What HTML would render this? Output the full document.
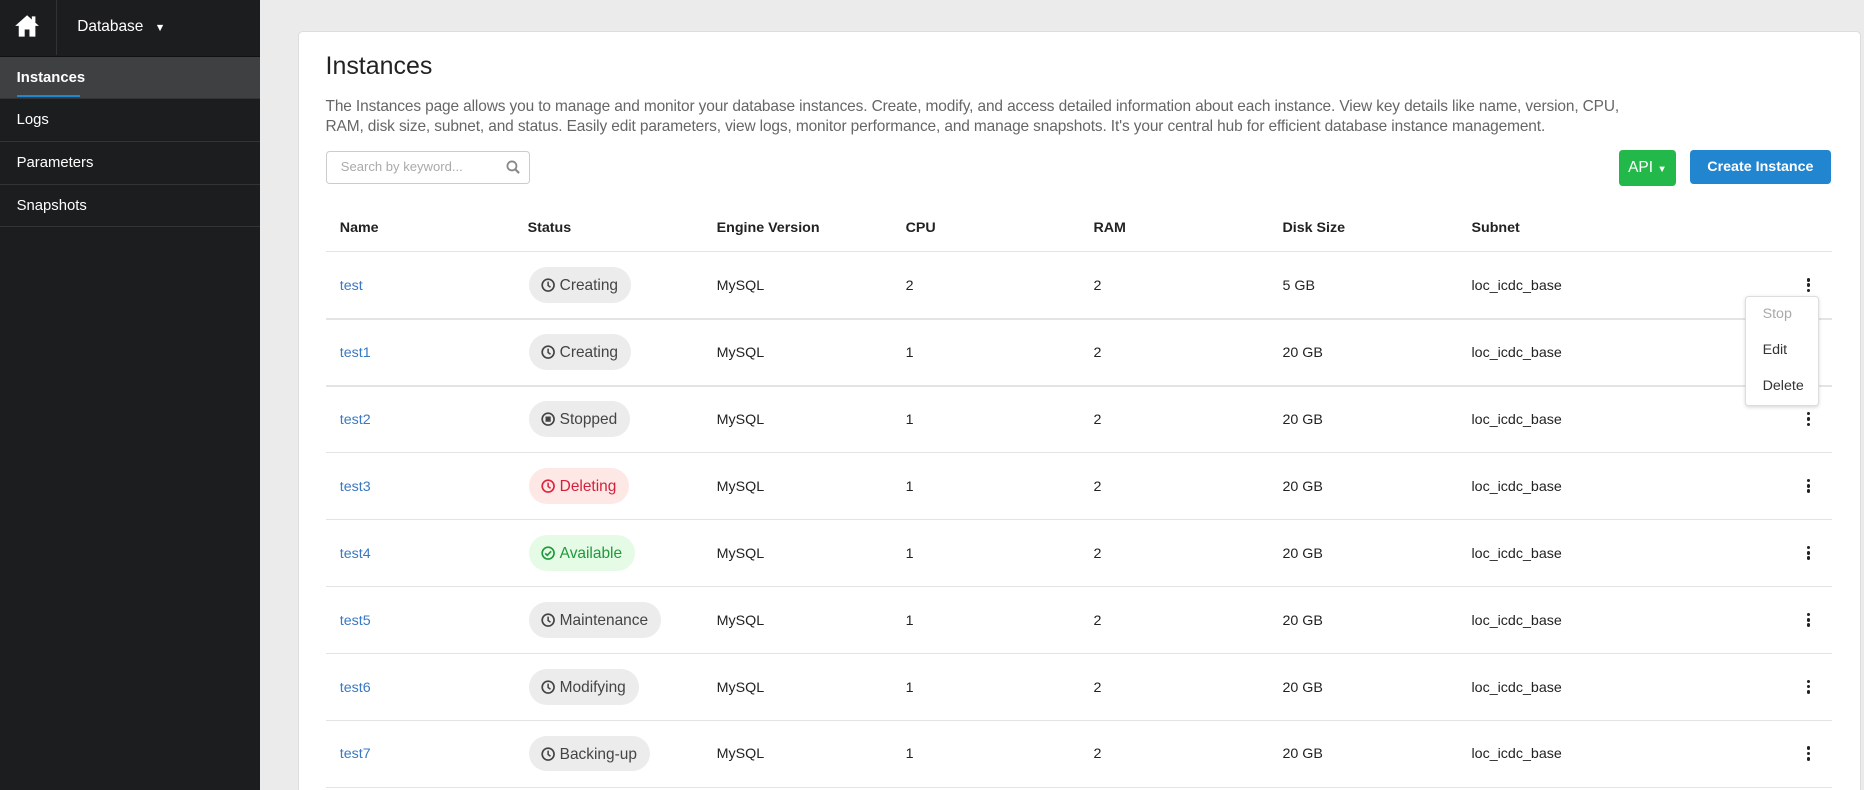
<!DOCTYPE html><html><head><style>
html,body{margin:0;padding:0;width:1864px;height:790px;overflow:hidden;background:#ebebeb;font-family:"Liberation Sans",sans-serif}
#w{zoom:1.18878;width:1568px;height:665px;position:relative}
.sb{position:absolute;left:0;top:0;width:219px;height:665px;background:#1c1d1f;color:#fff}
.hd{height:47px;position:relative;border-bottom:1px solid #111}
.hd .dv{position:absolute;left:47px;top:0;width:1px;height:46px;background:#333}
.hd .db{position:absolute;left:65px;top:15px;font-size:13px}
.nav div{height:35px;line-height:36px;padding-left:14px;font-size:12.5px;border-bottom:1px solid #333;position:relative}
.nav .on{background:#3f4042;font-weight:bold}
.nav .on:after{content:"";position:absolute;left:14px;bottom:1px;width:53px;height:2px;background:#2285d0}
.card{position:absolute;left:251px;top:26px;width:1313px;height:650px;background:#fff;border:1px solid #ddd;border-radius:4px}
.a{position:absolute}
h1{position:absolute;left:22px;top:17px;margin:0;font-size:21px;font-weight:normal;color:#222}
.desc{left:22px;top:55px;width:1130px;font-size:13px;line-height:17px;color:#666;letter-spacing:-0.1px}
.search{left:22px;top:100px;width:170px;height:26px;border:1px solid #ccc;border-radius:3px;font-size:11px;color:#aaa;line-height:26px}
.btn{color:#fff;font-size:12px;font-weight:bold;text-align:center;border-radius:3px}
.th{top:158px;font-size:12px;font-weight:bold;color:#222}
.line{left:22px;width:1267px;height:1px;background:#e4e4e4}
.td{font-size:12px;color:#222}
.nm{color:#3a78c3;font-size:12px}
.pill{height:30px;line-height:32px;border-radius:15px;background:#ececec;color:#444;font-size:13px;padding:0 11px 0 10px;white-space:nowrap}
.pill svg{vertical-align:-2px;margin-right:4px}
.keb{width:4px}
.keb i{display:block;width:3px;height:3px;border-radius:50%;background:#222;margin-bottom:1.5px}
.menu{left:1216px;top:222px;width:61px;height:91px;background:#fff;border:1px solid #ddd;border-radius:3px;box-shadow:0 1px 3px rgba(0,0,0,.15);font-size:12px}
.menu div{position:absolute;left:14px}
</style></head><body><div id="w">
<div class="sb"><div class="hd">
<svg class="a" style="left:12px;top:12px" width="22" height="20" viewBox="0 0 22 20"><path d="M11 1L1 10h3v9h5v-6h4v6h5v-9h3z" fill="#fff"/><rect x="15" y="2" width="3" height="5" fill="#fff"/></svg>
<div class="dv"></div><div class="db">Database <span style="font-size:9px;margin-left:6px">▼</span></div></div>
<div class="nav"><div class="on">Instances</div><div>Logs</div><div>Parameters</div><div>Snapshots</div></div></div>
<div class="card">
<h1>Instances</h1>
<div class="a desc">The Instances page allows you to manage and monitor your database instances. Create, modify, and access detailed information about each instance. View key details like name, version, CPU,<br>RAM, disk size, subnet, and status. Easily edit parameters, view logs, monitor performance, and manage snapshots. It's your central hub for efficient database instance management.</div>
<div class="a search"><span style="margin-left:12px">Search by keyword...</span><svg class="a" style="left:151px;top:7px" width="12" height="12" viewBox="0 0 12 12"><circle cx="5" cy="5" r="3.8" stroke="#888" stroke-width="1.5" fill="none"/><path d="M8 8l3 3" stroke="#888" stroke-width="1.8"/></svg></div>
<div class="a btn" style="left:1110px;top:99px;width:48px;height:31px;line-height:31px;background:#22b94a;font-weight:normal;font-size:13px">API <span style="font-size:8px">▼</span></div>
<div class="a btn" style="left:1170px;top:99px;width:118px;height:29px;line-height:29px;background:#2285d0">Create Instance</div>
<div class="a th" style="left:34px">Name</div><div class="a th" style="left:192px">Status</div><div class="a th" style="left:351px">Engine Version</div><div class="a th" style="left:510px">CPU</div><div class="a th" style="left:668px">RAM</div><div class="a th" style="left:827px">Disk Size</div><div class="a th" style="left:986px">Subnet</div>
<div class="a line" style="top:184px"></div>
<div id="rows"></div>
<div class="a menu"><div style="top:8px;color:#aaa">Stop</div><div style="top:38px;color:#333">Edit</div><div style="top:68px;color:#333">Delete</div></div>
</div>
<script>
var clk='<svg width="12" height="12" viewBox="0 0 12 12"><circle cx="6" cy="6" r="5" fill="none" stroke="C" stroke-width="1.4"/><path d="M6 3v3.3l2 1.5" fill="none" stroke="C" stroke-width="1.3"/></svg>';
var stp='<svg width="12" height="12" viewBox="0 0 12 12"><circle cx="6" cy="6" r="5" fill="none" stroke="#444" stroke-width="1.4"/><rect x="3.8" y="3.8" width="4.4" height="4.4" fill="#444"/></svg>';
var chk='<svg width="12" height="12" viewBox="0 0 12 12"><circle cx="6" cy="6" r="5" fill="none" stroke="#1e9a3c" stroke-width="1.4"/><path d="M3.5 6.2l1.8 1.7 3.2-3.4" fill="none" stroke="#1e9a3c" stroke-width="1.4"/></svg>';
var R=[["test","Creating",0,"2","5 GB"],["test1","Creating",0,"1","20 GB"],["test2","Stopped",1,"1","20 GB"],["test3","Deleting",2,"1","20 GB"],["test4","Available",3,"1","20 GB"],["test5","Maintenance",0,"1","20 GB"],["test6","Modifying",0,"1","20 GB"],["test7","Backing-up",0,"1","20 GB"]];
var h="";R.forEach(function(r,i){var cy=213+i*56.3;var t=cy-6;
var ic,st="";if(r[2]==0)ic=clk.replace(/C/g,"#444");else if(r[2]==1)ic=stp;else if(r[2]==2){ic=clk.replace(/C/g,"#e0243f");st="background:#fde8e6;color:#d4203a";}else{ic=chk;st="background:#e6fbe6;color:#1e9a3c";}
h+='<div class="a nm" style="left:34px;top:'+t+'px">'+r[0]+'</div>';
h+='<div class="a pill" style="left:193px;top:'+(cy-15)+'px;'+st+'">'+ic+r[1]+'</div>';
h+='<div class="a td" style="left:351px;top:'+t+'px">MySQL</div><div class="a td" style="left:510px;top:'+t+'px">'+r[3]+'</div><div class="a td" style="left:668px;top:'+t+'px">2</div><div class="a td" style="left:827px;top:'+t+'px">'+r[4]+'</div><div class="a td" style="left:986px;top:'+t+'px">loc_icdc_base</div>';
if(i!=1)h+='<div class="a keb" style="left:1268px;top:'+(cy-6)+'px"><i></i><i></i><i></i></div>';
h+='<div class="a line" style="top:'+(cy+28)+'px"></div>';});
document.getElementById("rows").innerHTML=h;
</script>
</div></body></html>
